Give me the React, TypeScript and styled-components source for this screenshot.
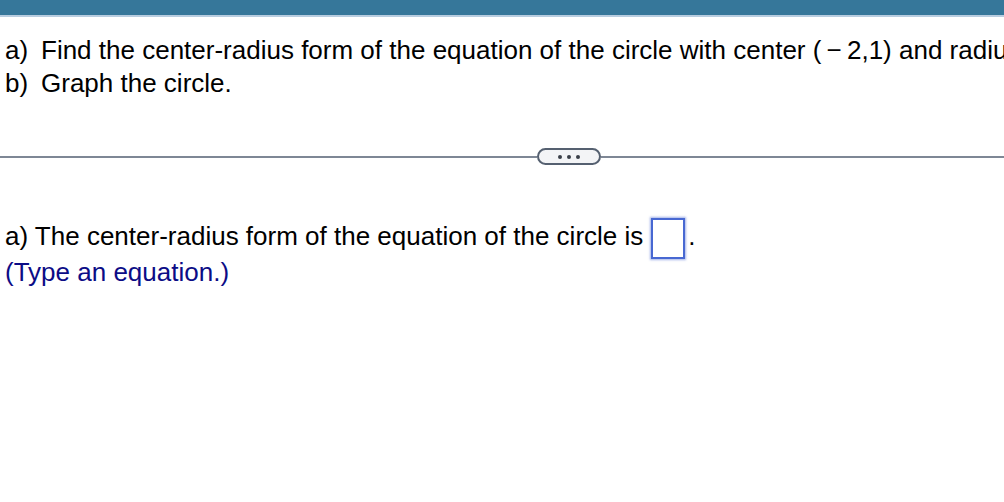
import React from "react";
import styled, { createGlobalStyle } from "styled-components";

const Global = createGlobalStyle`
  html, body { margin: 0; padding: 0; background: #fff; overflow: hidden; }
  body { font-family: "Liberation Sans", Arial, sans-serif; }
`;

const Page = styled.div`
  width: 1138px;
  height: 502px;
  display: flex;
  flex-direction: column;
`;

const TopBar = styled.div`
  height: 15px;
  background: #36779a;
  border-bottom: 2px solid #b8cde0;
  flex: none;
`;

const Question = styled.div`
  padding: 17px 0 0 5px;
  display: flex;
  flex-direction: column;
  font-size: 26px;
  color: #000;
`;

const Row = styled.div`
  display: flex;
  white-space: nowrap;
  line-height: 33px;
`;

const Label = styled.span`
  width: 36px;
  flex: none;
`;

const Divider = styled.div`
  margin-top: 48px;
  display: flex;
  align-items: center;
  height: 17px;
`;

const Line = styled.div`
  flex: 1;
  height: 2px;
  background: #7e8795;
`;

const Pill = styled.div`
  width: 60px;
  height: 13px;
  border: 2px solid #556070;
  border-radius: 9px;
  background: #f3f4f6;
  display: flex;
  align-items: center;
  justify-content: center;
  gap: 5px;
`;

const Dot = styled.span`
  width: 4px;
  height: 4px;
  border-radius: 50%;
  background: #3a3f48;
`;

const Answer = styled.div`
  padding: 56px 0 0 5px;
  font-size: 26px;
  display: flex;
  flex-direction: column;
`;

const AnswerRow = styled.div`
  display: flex;
  align-items: flex-start;
  white-space: nowrap;
  line-height: 30px;
  color: #000;
`;

const Box = styled.span`
  display: block;
  width: 30px;
  height: 37px;
  border: 2px solid #4868d2;
  box-shadow: 0 0 2px 1px rgba(72, 104, 210, 0.5);
  margin: -3px 3px -8px 8px;
  flex: none;
  background: #fff;
`;

const Hint = styled.div`
  color: #0c0c86;
  line-height: 30px;
  margin-top: 6px;
`;

export default function App() {
  return (
    <>
      <Global />
      <Page>
        <TopBar />
        <Question>
          <Row>
            <Label>a)</Label>
            <span>
              Find the center-radius form of the equation of the circle with center (&#8201;−&#8201;2,1) and radius 6.
            </span>
          </Row>
          <Row>
            <Label>b)</Label>
            <span>Graph the circle.</span>
          </Row>
        </Question>
        <Divider>
          <Line />
          <Pill>
            <Dot />
            <Dot />
            <Dot />
          </Pill>
          <Line />
        </Divider>
        <Answer>
          <AnswerRow>
            <span>a) The center-radius form of the equation of the circle is</span>
            <Box />
            <span>.</span>
          </AnswerRow>
          <Hint>(Type an equation.)</Hint>
        </Answer>
      </Page>
    </>
  );
}
